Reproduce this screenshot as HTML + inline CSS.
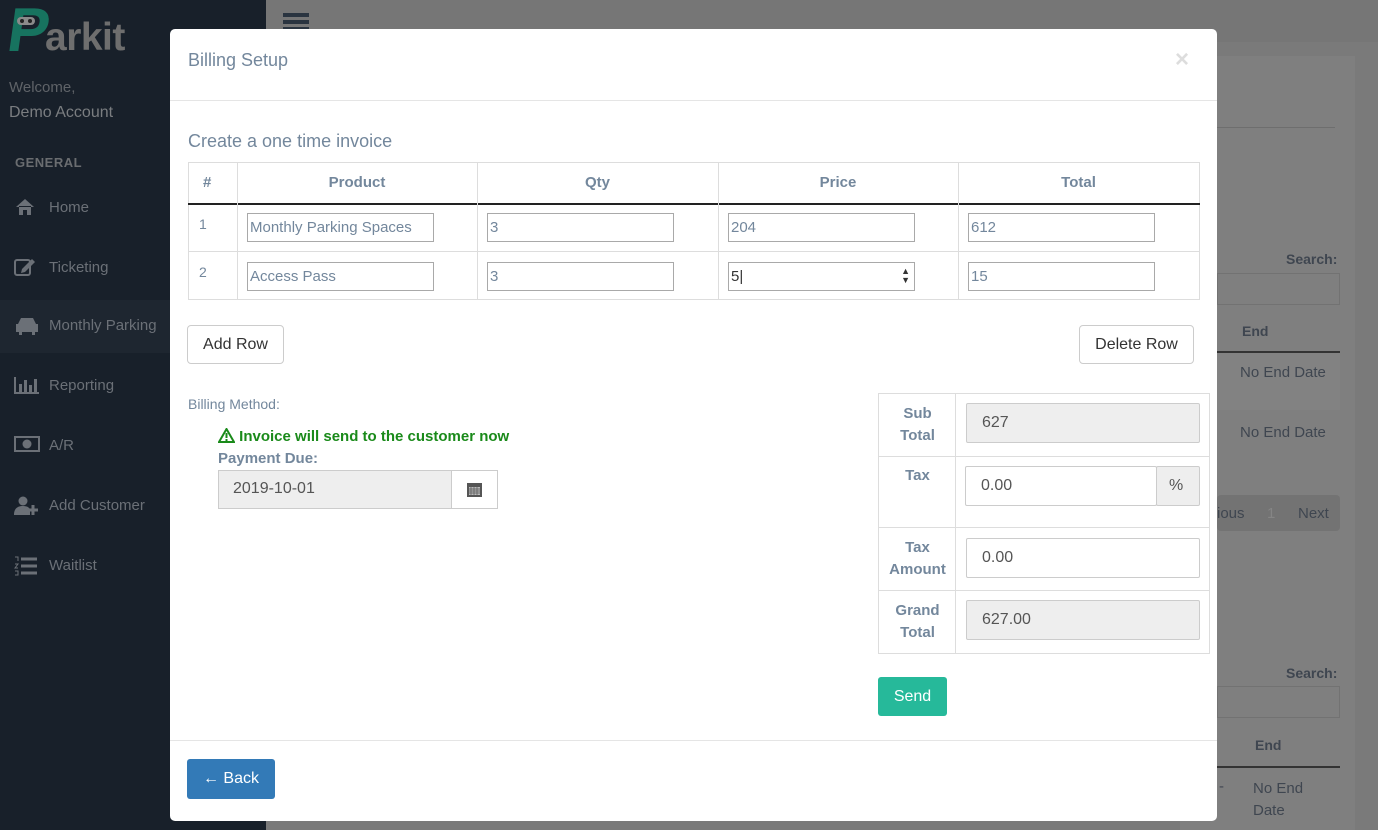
<!DOCTYPE html>
<html><head><meta charset="utf-8"><style>
*{box-sizing:border-box;margin:0;padding:0}
body{width:1378px;height:830px;overflow:hidden;font-family:"Liberation Sans",sans-serif;background:#7a7a7a;position:relative;color:#73879c}
.abs{position:absolute}
.side{left:0;top:0;width:266px;height:830px;background:#18202a}
.side .t{color:#6f7377;font-size:15px}
.nav{position:absolute;left:0;width:266px;height:52px;color:#6b7077;font-size:15px}
.nav span{position:absolute;left:49px;top:17px}
.nav svg{position:absolute;left:14px;top:16px}
.modal{left:170px;top:29px;width:1047px;height:792px;background:#fff;border-radius:5px}
.in{position:absolute;border:1px solid #a9a9a9;height:29px;font-size:15px;color:#73879c;padding:5px 2px;background:#fff}
.btn{position:absolute;border:1px solid #ccc;border-radius:4px;background:#fff;color:#333;font-size:16px;text-align:center}
.lbl{position:absolute;font-weight:bold;font-size:15px;color:#73879c;text-align:center;width:77px;line-height:22px}
.fc{position:absolute;border:1px solid #ccc;height:40px;font-size:16px;color:#555;padding:10px 15px;border-radius:2px}
.bg{color:#3f4650}
</style></head><body>
<div class="abs side">
 <div class="abs" style="left:8px;top:0px;font-size:62px;font-weight:bold;color:#17735f;transform:skewX(-8deg);line-height:62px">P</div>
 <div class="abs" style="left:17px;top:17px;width:18px;height:8px;border-radius:4px;background:#8a8a8a"></div>
 <div class="abs" style="left:20px;top:19px;width:4px;height:4px;border-radius:2px;background:#222"></div>
 <div class="abs" style="left:28px;top:19px;width:4px;height:4px;border-radius:2px;background:#222"></div>
 <div class="abs" style="left:45px;top:16px;font-size:39px;font-weight:bold;color:#6e6e6e;letter-spacing:-0.5px;line-height:44px">arkit</div>
 <div class="abs t" style="left:9px;top:79px;color:#5f6368">Welcome,</div>
 <div class="abs t" style="left:9px;top:104px;font-size:16px;color:#7a7d80">Demo Account</div>
 <div class="abs" style="left:15px;top:155px;font-size:13px;font-weight:bold;color:#6a6d70;letter-spacing:.5px">GENERAL</div>
 <div class="nav" style="top:182px"><svg width="22" height="18" viewBox="0 0 22 18"><path d="M2 9L11 1 20 9M5 8v9h4v-5h4v5h4V8" fill="#6b7077"/></svg><span>Home</span></div>
 <div class="nav" style="top:242px"><svg width="22" height="18" viewBox="0 0 22 18"><rect x="1" y="2" width="15" height="15" rx="2" fill="none" stroke="#6b7077" stroke-width="2"/><path d="M8 11l10-10 3 3-10 10-4 1z" fill="#6b7077"/></svg><span>Ticketing</span></div>
 <div class="nav" style="top:300px;background:#1e2630;height:53px"><svg width="26" height="20" viewBox="0 0 26 20"><path d="M4 8l3-6h12l3 6h2v8h-3v3h-3v-3H8v3H5v-3H2V8z" fill="#6b7077"/></svg><span>Monthly Parking</span></div>
 <div class="nav" style="top:360px"><svg width="26" height="18" viewBox="0 0 26 18"><path d="M1 1v16h24" stroke="#6b7077" stroke-width="2" fill="none"/><rect x="5" y="8" width="3" height="8" fill="#6b7077"/><rect x="10" y="4" width="3" height="12" fill="#6b7077"/><rect x="15" y="9" width="3" height="7" fill="#6b7077"/><rect x="20" y="3" width="3" height="13" fill="#6b7077"/></svg><span>Reporting</span></div>
 <div class="nav" style="top:420px"><svg width="26" height="16" viewBox="0 0 26 16"><rect x="1" y="1" width="24" height="14" fill="none" stroke="#6b7077" stroke-width="2"/><circle cx="13" cy="8" r="4.5" fill="#6b7077"/></svg><span>A/R</span></div>
 <div class="nav" style="top:480px"><svg width="26" height="20" viewBox="0 0 26 20"><circle cx="9" cy="5" r="4.5" fill="#6b7077"/><path d="M0 19c0-7 4-9 9-9s6 2 7 3v6z" fill="#6b7077"/><path d="M19 9v10M14 14h10" stroke="#6b7077" stroke-width="3"/></svg><span>Add Customer</span></div>
 <div class="nav" style="top:540px"><svg width="24" height="20" viewBox="0 0 24 20"><path d="M7 3h16M7 10h16M7 17h16" stroke="#6b7077" stroke-width="3"/><path d="M1 1h3v4M1 8h3l-3 4h3M1 15h3v4H1" stroke="#6b7077" fill="none"/></svg><span>Waitlist</span></div>
</div>
<div class="abs" style="left:266px;top:0;width:1112px;height:42px;background:#767676"></div>
<div class="abs" style="left:283px;top:13px;width:26px;height:4px;background:#2a3440;box-shadow:0 7px 0 #2a3440,0 14px 0 #2a3440"></div>
<div class="abs" style="left:1180px;top:56px;width:175px;height:774px;background:#7f7f7f"></div>
<div class="abs" style="left:1215px;top:127px;width:120px;height:1px;background:#6e6e6e"></div>
<div class="abs bg" style="left:1286px;top:251px;font-size:14px;font-weight:bold">Search:</div>
<div class="abs" style="left:1217px;top:273px;width:123px;height:32px;border:1px solid #727272"></div>
<div class="abs bg" style="left:1242px;top:323px;font-size:14px;font-weight:bold">End</div>
<div class="abs" style="left:1217px;top:351px;width:123px;height:2px;background:#333"></div>
<div class="abs" style="left:1217px;top:353px;width:123px;height:57px;background:#828282"></div>
<div class="abs bg" style="left:1240px;top:364px;font-size:15px">No End Date</div>
<div class="abs bg" style="left:1240px;top:424px;font-size:15px">No End Date</div>
<div class="abs" style="left:1217px;top:495px;width:123px;height:36px;background:#737373;border-radius:4px"></div>
<div class="abs bg" style="left:1217px;top:505px;font-size:15px">ious</div>
<div class="abs" style="left:1267px;top:505px;font-size:15px;color:#858585">1</div>
<div class="abs bg" style="left:1298px;top:505px;font-size:15px">Next</div>
<div class="abs bg" style="left:1286px;top:665px;font-size:14px;font-weight:bold">Search:</div>
<div class="abs" style="left:1217px;top:686px;width:123px;height:32px;border:1px solid #727272"></div>
<div class="abs bg" style="left:1255px;top:737px;font-size:14px;font-weight:bold">End</div>
<div class="abs" style="left:1217px;top:766px;width:123px;height:2px;background:#333"></div>
<div class="abs bg" style="left:1253px;top:778px;font-size:15px;line-height:22px">No End<br>Date</div>
<div class="abs bg" style="left:1219px;top:778px;font-size:15px">-</div>

<div class="abs modal">
 <div class="abs" style="left:18px;top:21px;font-size:18px;color:#73879c">Billing Setup</div>
 <div class="abs" style="left:1005px;top:17px;font-size:24px;color:#ddd;font-weight:bold">×</div>
 <div class="abs" style="left:0;top:71px;width:1047px;height:1px;background:#e5e5e5"></div>
 <div class="abs" style="left:18px;top:102px;font-size:18px;color:#73879c">Create a one time invoice</div>
 <div class="abs" style="left:18px;top:133px;width:1012px;height:138px;border:1px solid #ddd"></div>
 <div class="abs" style="left:18px;top:174px;width:1012px;height:2px;background:#222"></div>
 <div class="abs" style="left:18px;top:222px;width:1012px;height:1px;background:#ddd"></div>
 <div class="abs" style="left:67px;top:133px;width:1px;height:138px;background:#ddd"></div>
 <div class="abs" style="left:307px;top:133px;width:1px;height:138px;background:#ddd"></div>
 <div class="abs" style="left:548px;top:133px;width:1px;height:138px;background:#ddd"></div>
 <div class="abs" style="left:788px;top:133px;width:1px;height:138px;background:#ddd"></div>
 <div class="abs" style="left:33px;top:145px;font-size:15px;font-weight:bold">#</div>
 <div class="abs" style="left:67px;top:145px;width:240px;text-align:center;font-size:15px;font-weight:bold">Product</div>
 <div class="abs" style="left:307px;top:145px;width:241px;text-align:center;font-size:15px;font-weight:bold">Qty</div>
 <div class="abs" style="left:548px;top:145px;width:240px;text-align:center;font-size:15px;font-weight:bold">Price</div>
 <div class="abs" style="left:788px;top:145px;width:241px;text-align:center;font-size:15px;font-weight:bold">Total</div>
 <div class="abs" style="left:29px;top:187px;font-size:14px">1</div>
 <div class="abs" style="left:29px;top:235px;font-size:14px">2</div>
 <div class="in" style="left:77px;top:184px;width:187px">Monthly Parking Spaces</div>
 <div class="in" style="left:317px;top:184px;width:187px">3</div>
 <div class="in" style="left:558px;top:184px;width:187px">204</div>
 <div class="in" style="left:798px;top:184px;width:187px">612</div>
 <div class="in" style="left:77px;top:233px;width:187px">Access Pass</div>
 <div class="in" style="left:317px;top:233px;width:187px">3</div>
 <div class="in" style="left:558px;top:233px;width:187px;color:#333">5|<span style="position:absolute;right:4px;top:4px;font-size:9px;line-height:9px;color:#333">▲<br>▼</span></div>
 <div class="in" style="left:798px;top:233px;width:187px">15</div>
 <div class="btn" style="left:17px;top:296px;width:97px;height:39px;line-height:37px">Add Row</div>
 <div class="btn" style="left:909px;top:296px;width:115px;height:39px;line-height:37px">Delete Row</div>
 <div class="abs" style="left:18px;top:367px;font-size:14px">Billing Method:</div>
 <div class="abs" style="left:48px;top:399px;font-size:15px;font-weight:bold;color:#1a8a1a"><svg width="17" height="15" viewBox="0 0 17 15" style="vertical-align:-2px"><path d="M8.5 1L16 14H1z" fill="none" stroke="#1a8a1a" stroke-width="2"/><path d="M8.5 5v5M8.5 11v2" stroke="#1a8a1a" stroke-width="2"/></svg> Invoice will send to the customer now</div>
 <div class="abs" style="left:48px;top:421px;font-size:15px;font-weight:bold">Payment Due:</div>
 <div class="abs" style="left:48px;top:441px;width:280px;height:39px;border:1px solid #ccc;background:#eee"></div>
 <div class="abs" style="left:281px;top:441px;width:47px;height:39px;border:1px solid #ccc;background:#fff"></div>
 <svg class="abs" style="left:297px;top:452px" width="15" height="16" viewBox="0 0 15 16"><rect x="0" y="2" width="15" height="14" fill="#555"/><rect x="2" y="6" width="11" height="8" fill="#bbb"/><path d="M2 8h11M2 10h11M2 12h11M4 6v8M7 6v8M10 6v8" stroke="#555" stroke-width=".7"/></svg>
 <div class="abs" style="left:63px;top:451px;font-size:16px;color:#555">2019-10-01</div>
 <div class="abs" style="left:708px;top:364px;width:332px;height:261px;border:1px solid #ddd"></div>
 <div class="abs" style="left:785px;top:364px;width:1px;height:261px;background:#ddd"></div>
 <div class="abs" style="left:708px;top:427px;width:332px;height:1px;background:#ddd"></div>
 <div class="abs" style="left:708px;top:498px;width:332px;height:1px;background:#ddd"></div>
 <div class="abs" style="left:708px;top:561px;width:332px;height:1px;background:#ddd"></div>
 <div class="lbl" style="left:709px;top:374px">Sub<br>Total</div>
 <div class="lbl" style="left:709px;top:436px">Tax</div>
 <div class="lbl" style="left:709px;top:508px">Tax<br>Amount</div>
 <div class="lbl" style="left:709px;top:571px">Grand<br>Total</div>
 <div class="fc" style="left:796px;top:374px;width:234px;background:#eee">627</div>
 <div class="fc" style="left:795px;top:437px;width:192px;background:#fff">0.00</div>
 <div class="fc" style="left:986px;top:437px;width:44px;background:#eee;padding:10px 12px">%</div>
 <div class="fc" style="left:796px;top:509px;width:234px;background:#fff">0.00</div>
 <div class="fc" style="left:796px;top:571px;width:234px;background:#eee">627.00</div>
 <div class="abs" style="left:708px;top:648px;width:69px;height:39px;background:#26b99a;border-radius:3px;color:#fff;font-size:16px;text-align:center;line-height:39px">Send</div>
 <div class="abs" style="left:0;top:711px;width:1047px;height:1px;background:#e5e5e5"></div>
 <div class="abs" style="left:17px;top:730px;width:88px;height:40px;background:#337ab7;border-radius:3px;color:#fff;font-size:16px;text-align:center;line-height:40px">← Back</div>
</div>
</body></html>
